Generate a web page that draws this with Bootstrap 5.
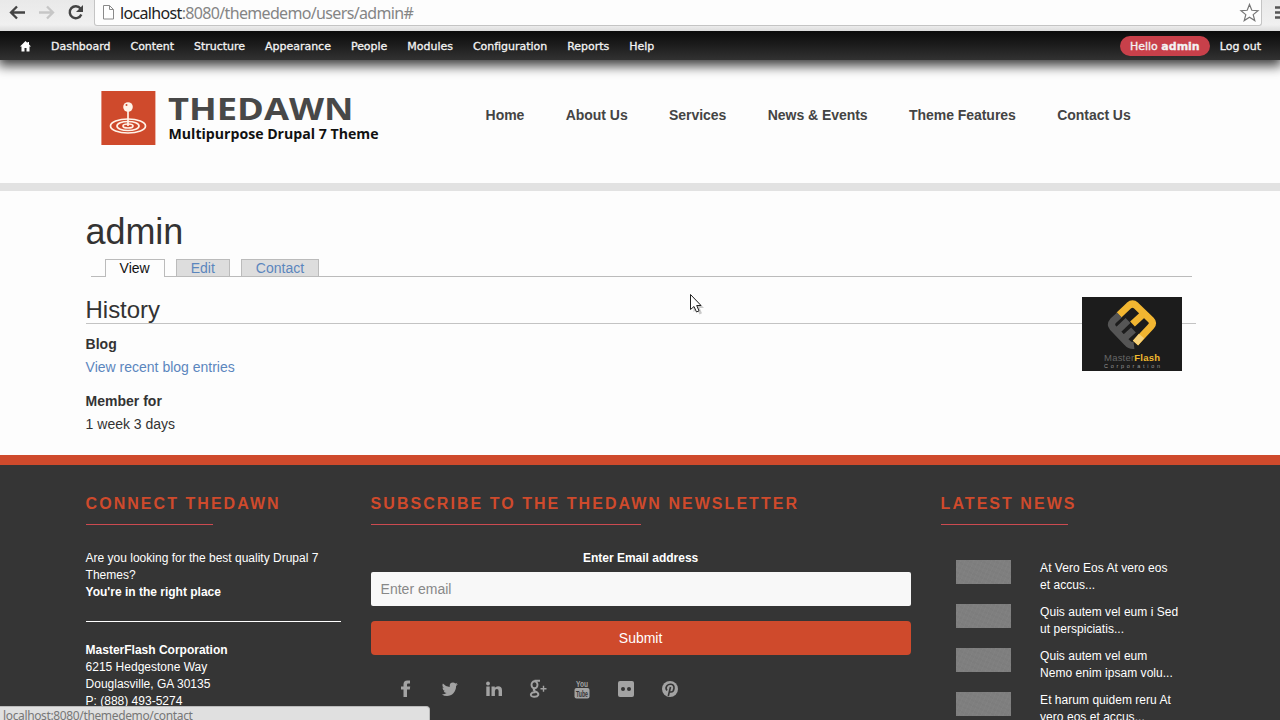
<!DOCTYPE html>
<html lang="en">
<head>
<meta charset="utf-8">
<meta name="viewport" content="width=device-width, initial-scale=1">
<title>admin | TheDawn</title>
<link href="https://cdn.jsdelivr.net/npm/bootstrap@5.3.0/dist/css/bootstrap.min.css" rel="stylesheet">
<style>
  html, body { height: 720px; overflow: hidden; }
  body { font: 14px/20px "Liberation Sans", Arial, sans-serif; color: #333; background: #fdfdfd; }
  a { color: #5b86bd; text-decoration: none; }
  svg { display: block; flex: none; }
  .wrap { width: 1140px; margin-left: 70.6px; padding: 0 15px; }
  .browser { height: 31px; background: linear-gradient(#e9e9e9, #f0f0f0 80%, #dcdcdc); }
  .address { width: 1168px; height: 26px; margin-left: 94px; background: #fdfdfd; border: 1px solid #c4c4c4; border-top: 0; border-radius: 0 0 3px 3px; font: 16px/26px "Noto Sans", sans-serif; color: #858585; }
  .address b { font-weight: 400; color: #222; }
  .address .url { letter-spacing: -.66px; }
  .tool { position: absolute; top: 0; }
  .adminbar { height: 29px; background: linear-gradient(#0b0b0b, #1b1b1b 45%, #323232); box-shadow: 0 4px 12px 2px rgba(0,0,0,.75); clip-path: inset(0 -30px -30px -30px); font: 11px/29px "DejaVu Sans", Verdana, sans-serif; position: relative; padding: 1px 19px 0 20px; }
  .adminbar a { color: #f3f3f3; -webkit-text-stroke: .3px #f3f3f3; white-space: nowrap; }
  .adminbar .menu { margin-left: 20px; gap: 20px; letter-spacing: -.022px; }
  .adminbar .hello { background: #c8404a; border-radius: 10px; height: 20px; line-height: 21px; width: 90px; text-align: center; margin-right: 10px; }
  .masthead { height: 131px; border-bottom: 8px solid #e2e2e2; background: #fdfdfd; }
  .mainmenu { gap: 41.4px; margin-top: 45px; margin-left: 104px; font-weight: 700; letter-spacing: -.04px; }
  .mainmenu a { color: #444; white-space: nowrap; }
  .account { height: 264px; padding-top: 1px; }
  h1 { font-size: 36px; line-height: 40px; font-weight: 400; margin: 20px 0 7px; letter-spacing: -.1px; }
  .tabbar { height: 18px; border-bottom: 1px solid #bbb; margin: 0 4px 0 5px; padding-left: 14px; gap: 11px; }
  .tabbar a { height: 17px; line-height: 17px; background: #ddd; border: 1px solid #bbb; border-bottom: 0; padding: 0 14px; }
  .tabbar a.active { height: 18px; background: #fdfdfd; color: #111; }
  h2 { font-size: 24px; line-height: 26px; font-weight: 400; margin: 20px 0 0; height: 27px; border-bottom: 1px solid #c3c3c3; letter-spacing: -.06px; }
  .corp { float: right; position: relative; margin: 20px 14px 0 0; }
  dl { margin: 0; }
  dt { margin-top: 10px; line-height: 20px; }
  dd { margin: 3px 0 0; line-height: 20px; }
  dd + dt { margin-top: 14px; }
  .foot { height: 265px; border-top: 10px solid #cf4a2c; background: #353535; color: #fff; font-size: 12px; line-height: 17px; overflow: hidden; }
  .foot .wrap { padding: 0; }
  .foot .row { --bs-gutter-x: 30px; margin: 0; }
  h3 { font-size: 16px; line-height: 18px; font-weight: 700; letter-spacing: 2.04px; color: #cf4a2c; margin: 30px 0 0; height: 29px; white-space: nowrap; }
  .rule { width: 50%; border-top: 1px solid #cc4a50; margin-bottom: 25px; }
  .foot hr { border: 0; height: 1px; background: #fff; opacity: 1; margin: 20px 0; }
  .foot .form-control { height: 34px; padding: 0 10px; border: 0; border-radius: 2px; background: #f8f8f8; font-size: 14px; }
  .foot .form-control::placeholder { color: #888; }
  .foot .btn { height: 34px; margin-top: 15px; padding: 0; font-size: 14px; border: 0; border-radius: 4px; background: #cf4a2c; color: #fff; }
  .social { gap: 24px; margin: 24px 0 0 25px; }
  .news { padding: 10px 0 0 15px; }
  .news div { height: 44px; gap: 29.5px; letter-spacing: .03px; }
  .news div > i { width: 55px; height: 24px; background: #7f7f7f; background-image: repeating-linear-gradient(115deg, #8884 0 1px, transparent 1px 4px), repeating-linear-gradient(23deg, #7774 0 2px, transparent 2px 5px); }
  .statusbar { position: absolute; left: 0; top: 706px; width: 430px; height: 20px; background: #e0e0e0; border: 1px solid #bbb; border-width: 1px 1px 0 0; border-radius: 0 4px 0 0; padding-left: 3px; font: 12px/18px "Noto Sans", sans-serif; letter-spacing: -.36px; color: #777; }
  .pointer { position: absolute; left: 689px; top: 293px; }
</style>
</head>
<body>
<div class="browser position-relative">
  <svg class="tool start-0" width="94" height="28" fill="none" stroke="#444" stroke-width="2.3"><path d="M25 12.500H11M17 6.500l-6 6 6 6"/><path d="M39 12.500h14M47 6.500l6 6-6 6" stroke="#c6c6c6"/><path d="M80.500 8.500a6 6 0 1 0 .8 6" stroke-width="2.400"/><path d="M83 5v7h-7z" fill="#444" stroke="none"/></svg>
  <div class="address d-flex">
    <svg class="ms-2" width="17" height="25" fill="#fff" stroke="#8a8a8a"><path d="M.5 5.500h6l4 4v9.500H.5zM6.500 5.500v4h4"/></svg><span class="url"><b>localhost</b>:8080/themedemo/users/admin#</span>
  </div>
  <svg class="tool end-0" width="44" height="28"><path d="M13.500 4.500l2.300 5.800 6.200.4-4.800 3.900 1.600 6-5.300-3.300-5.300 3.300 1.600-6L5 10.700l6.200-.4z" fill="#fff" stroke="#777" stroke-width="1.200"/><path d="M39 7.500h5M39 12.500h5M39 17.500h5" stroke="#555" stroke-width="2.500"/></svg>
</div>
<nav class="adminbar d-flex align-items-center">
  <svg width="11" height="11" viewBox="0 0 11 11" fill="#fff"><path d="M5.500 0L0 5.500h1.500V10.500H4.500V7h2v3.500H9.500V5.500H11L9 3.500V1H7.500v1z"/></svg>
  <div class="d-flex menu"><a href="#">Dashboard</a><a href="#">Content</a><a href="#">Structure</a><a href="#">Appearance</a><a href="#">People</a><a href="#">Modules</a><a href="#">Configuration</a><a href="#">Reports</a><a href="#">Help</a></div>
  <a href="#" class="hello ms-auto">Hello <b>admin</b></a><a href="#">Log out</a>
</nav>
<header class="masthead"><div class="wrap d-flex">
  <svg width="296" height="100">
    <rect x="15.400" y="31" width="54" height="54" fill="#cf4a2c"/>
    <g fill="none" stroke="#fff3e8" stroke-width="1.700"><ellipse cx="42" cy="66" rx="17.500" ry="7"/><ellipse cx="42" cy="66" rx="11" ry="4.500"/><ellipse cx="42" cy="66" rx="5" ry="2"/><path d="M42 50v16"/></g>
    <circle cx="42" cy="47" r="4.800" fill="#fff3e8"/><circle cx="40.500" cy="45" r="1" fill="#cf4a2c"/>
    <text x="82" y="60" font-family="Open Sans" font-weight="700" font-size="30" fill="#484848" textLength="185.500" lengthAdjust="spacingAndGlyphs">THEDAWN</text>
    <text x="82.500" y="79" font-family="Open Sans" font-weight="700" font-size="14" fill="#111" textLength="210" lengthAdjust="spacingAndGlyphs">Multipurpose Drupal 7 Theme</text>
  </svg>
  <nav class="mainmenu d-flex"><a href="#">Home</a><a href="#">About Us</a><a href="#">Services</a><a href="#">News &amp; Events</a><a href="#">Theme Features</a><a href="#">Contact Us</a></nav>
</div></header>
<main class="account"><div class="wrap">
  <h1>admin</h1>
  <nav class="tabbar d-flex"><a href="#" class="active">View</a><a href="#">Edit</a><a href="#">Contact</a></nav>
  <svg class="corp" width="100" height="74">
    <rect width="100" height="74" fill="#1c1c1c"/>
    <g fill="none" stroke-width="7"><path d="M37 18L47 8.500q3.500-3 7 0L69 23q3 3 0 6.500L53.500 46M62 16.500L50.500 27" stroke="#f2b631"/><path d="M53.500 46l6-7" stroke="#f7d27a"/><path d="M37.500 18L31 24q-3 3.500 0 7L45 45.500q3 3.500 7 3M34 35l12-11.500M41.500 42l10-9" stroke="#555"/></g>
    <text x="22" y="63.500" font-family="Liberation Sans" font-size="9.500" fill="#666" textLength="56">Master<tspan fill="#f0b92f" font-weight="700">Flash</tspan></text>
    <text x="22" y="70.500" font-family="Liberation Sans" font-size="5.500" fill="#999" textLength="56">Corporation</text>
  </svg>
  <h2>History</h2>
  <dl><dt>Blog</dt><dd><a href="#">View recent blog entries</a></dd><dt>Member for</dt><dd>1 week 3 days</dd></dl>
</div></main>
<footer class="foot"><div class="wrap"><div class="row">
  <section class="col-3"><h3>CONNECT THEDAWN</h3><div class="rule"></div>
    Are you looking for the best quality Drupal 7 Themes?<br><b>You're in the right place</b>
    <hr><b>MasterFlash Corporation</b><br>6215 Hedgestone Way<br>Douglasville, GA 30135<br>P: (888) 493-5274
  </section>
  <section class="col-6"><h3>SUBSCRIBE TO THE THEDAWN NEWSLETTER</h3><div class="rule"></div>
    <label class="d-block text-center fw-bold" style="margin-bottom:5px">Enter Email address</label>
    <input class="form-control" placeholder="Enter email">
    <button class="btn w-100">Submit</button>
    <div class="social d-flex">
      <svg width="20" height="20" viewBox="0 0 20 20" fill="#a3a3a3"><path d="M14 1.500v3h-2q-1 0-1 1.200V7.500h3.200l-.4 3H11V18H7.500v-7.500H5v-3h2.500V5.300Q7.500 1.500 11.300 1.500z"/></svg>
      <svg width="20" height="20" viewBox="0 0 20 20" fill="#a3a3a3"><path d="M18 5l-1.900 2C16 13 12 17 7 17q-3 0-5-1.500 2.800 0 4.600-1.400-2.300-.2-3-2.300h1.400q-2.500-.8-2.600-3.300l1.500.4Q1.600 7 2.900 4.400q2.700 3.200 6.800 3.500Q9.300 3.500 13 3.500q1.300 0 2.400 1l2-.8-1.300 1.700z"/></svg>
      <svg width="20" height="20" viewBox="0 0 20 20" fill="#a3a3a3"><circle cx="4" cy="4.500" r="1.900"/><path d="M2.300 7.500h3.400V17H2.300zM7.500 7.500h3.300v1.300Q12 7.200 14 7.200q4 0 4 4.200V17h-3.400v-5q0-2-1.700-2-2 0-2 2.200V17H7.500z"/></svg>
      <svg width="20" height="20" viewBox="0 0 20 20" fill="none" stroke="#a3a3a3" stroke-width="1.900"><ellipse cx="6.500" cy="5.800" rx="3" ry="3.500"/><path d="M12 1.800H6.500M7 9.800q-3 1 .3 2.500Q11 14 10.300 16q-1 2-4.300 1.800-4-.5-3-2.800 1-2 4.500-1.700"/><path d="M12.500 9.700h6M15.500 6.700v6" stroke-width="1.400"/></svg>
      <svg width="20" height="20" viewBox="0 0 20 20"><text x="4" y="8" font-family="Liberation Sans" font-size="9" font-weight="700" fill="#a3a3a3" textLength="12" lengthAdjust="spacingAndGlyphs">You</text><rect x="2.500" y="9" width="15" height="10.500" rx="2" fill="#a3a3a3"/><text x="4" y="17.500" font-family="Liberation Sans" font-size="9" font-weight="700" fill="#353535" textLength="12" lengthAdjust="spacingAndGlyphs">Tube</text></svg>
      <svg width="20" height="20" viewBox="0 0 20 20"><rect x="2" y="2" width="16" height="16" rx="2" fill="#a3a3a3"/><circle cx="7" cy="10" r="2" fill="#353535"/><circle cx="13" cy="10" r="2" fill="#353535"/></svg>
      <svg width="20" height="20" viewBox="0 0 20 20"><circle cx="10" cy="10" r="8" fill="#a3a3a3"/><path d="M7 11.500q-2-2.500 0-4.800Q8.500 5 11 5.300q3.300.5 3 4-.5 3.700-3 3.700-1.200 0-1.600-1M10.500 8L8.300 17" fill="none" stroke="#353535" stroke-width="1.600"/></svg>
    </div>
  </section>
  <section class="col-3"><h3>LATEST NEWS</h3><div class="rule"></div>
    <div class="news">
      <div class="d-flex"><i></i><span>At Vero Eos At vero eos<br>et accus...</span></div>
      <div class="d-flex"><i></i><span>Quis autem vel eum i Sed<br>ut perspiciatis...</span></div>
      <div class="d-flex"><i></i><span>Quis autem vel eum<br>Nemo enim ipsam volu...</span></div>
      <div class="d-flex"><i></i><span>Et harum quidem reru At<br>vero eos et accus...</span></div>
    </div>
  </section>
</div></div></footer>
<div class="statusbar">localhost:8080/themedemo/contact</div>
<svg class="pointer" width="20" height="24"><path d="M2.500 2v15l3.500-3 2.500 5.500 2.500-1.200L8.700 13H13z" fill="#0003" transform="translate(2 2)"/><path d="M1.500 1.500v15l3.500-3 2.500 5.500 2.500-1.200L7.700 12.500H12z" fill="#fff" stroke="#222"/></svg>
</body>
</html>
